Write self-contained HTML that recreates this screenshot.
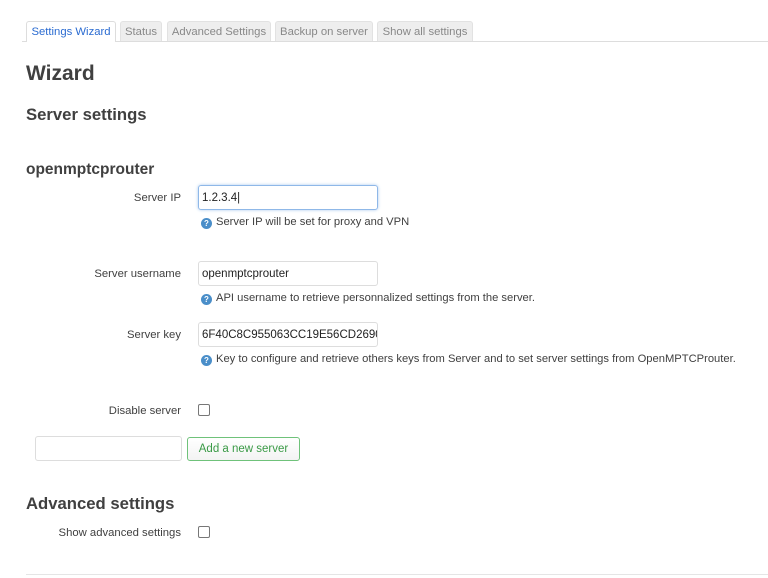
<!DOCTYPE html>
<html><head><style>
body{margin:0;width:768px;height:578px;background:#fff;font-family:"Liberation Sans",sans-serif;color:#404040;position:relative;overflow:hidden}
.a{position:absolute;white-space:nowrap}
.tab{position:absolute;top:21px;height:20px;line-height:21px;font-size:11.3px;text-align:center;background:#eee;color:#888;border:1px solid #e2e2e2;border-bottom:none;border-radius:3px 3px 0 0;box-sizing:border-box;white-space:nowrap}
.lbl{position:absolute;right:587px;font-size:11.3px;color:#404040;white-space:nowrap;margin-top:1px}
.inp{position:absolute;left:198px;width:180px;height:25px;border:1px solid #ddd;border-radius:3px;box-sizing:border-box;font-size:11.5px;line-height:24px;padding-left:3px;color:#222;overflow:hidden;white-space:nowrap}
.help{position:absolute;left:201px;font-size:11.2px;color:#404040;white-space:nowrap;margin-top:1px}
.help i{display:inline-block;width:11px;height:11px;border-radius:50%;background:#4a8ec9;color:#fff;font-size:8px;line-height:11px;text-align:center;font-style:normal;font-weight:bold;margin-right:4px;vertical-align:-1px}
.cb{position:absolute;left:198px;width:10px;height:10px;border:1px solid #777;border-radius:2px}
</style></head><body>
<div class="a" style="left:22px;top:41px;width:746px;height:1px;background:#ddd"></div>
<div class="tab" style="left:26px;width:90px;background:#fff;color:#2a6bd1;border-color:#ddd;height:21px">Settings Wizard</div>
<div class="tab" style="left:120px;width:42px">Status</div>
<div class="tab" style="left:167px;width:104px">Advanced Settings</div>
<div class="tab" style="left:275px;width:98px">Backup on server</div>
<div class="tab" style="left:377px;width:96px">Show all settings</div>
<div class="a" style="left:26px;top:62px;font-size:21px;font-weight:bold">Wizard</div>
<div class="a" style="left:26px;top:105px;font-size:16.7px;font-weight:bold">Server settings</div>
<div class="a" style="left:26px;top:161px;font-size:15.5px;font-weight:bold">openmptcprouter</div>
<div class="lbl" style="top:191px">Server IP</div>
<div class="inp" style="top:185px;border-color:#8fb8e8;box-shadow:0 0 3px #a9c9ef">1.2.3.4|</div>
<div class="help" style="top:215px"><i>?</i>Server IP will be set for proxy and VPN</div>
<div class="lbl" style="top:267px">Server username</div>
<div class="inp" style="top:261px">openmptcprouter</div>
<div class="help" style="top:291px"><i>?</i>API username to retrieve personnalized settings from the server.</div>
<div class="lbl" style="top:328px">Server key</div>
<div class="inp" style="top:322px">6F40C8C955063CC19E56CD2690</div>
<div class="help" style="top:352px"><i>?</i>Key to configure and retrieve others keys from Server and to set server settings from OpenMPTCProuter.</div>
<div class="lbl" style="top:404px">Disable server</div>
<div class="cb" style="top:404px"></div>
<div class="a" style="left:35px;top:436px;width:147px;height:25px;border:1px solid #ddd;border-radius:3px;box-sizing:border-box"></div>
<div class="a" style="left:187px;top:437px;width:113px;height:24px;border:1px solid #6fc27a;border-radius:3px;box-sizing:border-box;background:linear-gradient(#fff,#f3f3f3);color:#3a9a46;font-size:11.5px;text-align:center;line-height:23px">Add a new server</div>
<div class="a" style="left:26px;top:494px;font-size:16.7px;font-weight:bold">Advanced settings</div>
<div class="lbl" style="top:526px">Show advanced settings</div>
<div class="cb" style="top:526px"></div>
<div class="a" style="left:26px;top:574px;width:742px;height:1px;background:#e5e5e5"></div>
</body></html>
